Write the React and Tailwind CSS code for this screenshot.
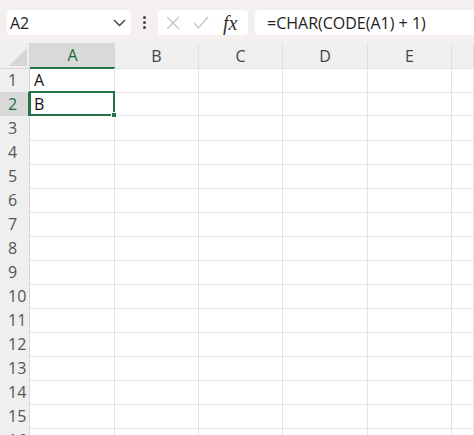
import React from 'react';

const cols = ['A', 'B', 'C', 'D', 'E', ''];
const rows = Array.from({ length: 16 }, (_, i) => i + 1);
const data = { 1: { A: 'A' }, 2: { A: 'B' } };

const gridCols = 'grid grid-cols-[30px_85px_84px_84px_85px_84px_1fr]';

function NameBox() {
  return (
    <div className="flex items-center justify-between w-[124px] h-[25px] bg-white rounded-[4px] pl-[3px] pr-[5px]">
      <span className="text-[16px] text-[#222]">A2</span>
      <svg width="13" height="8" viewBox="0 0 13 8" fill="none" stroke="#444" strokeWidth="1.5">
        <path d="M1 1l5.5 5.5L12 1" />
      </svg>
    </div>
  );
}

function FormulaButtons() {
  return (
    <div className="flex items-center w-[90px] h-[25px] bg-white rounded-[4px] pl-[8px]">
      <svg width="14" height="14" viewBox="0 0 14 14" stroke="#c4c4c4" strokeWidth="1.2">
        <path d="M1 1l12 12M13 1L1 13" />
      </svg>
      <svg className="ml-[13px]" width="16" height="13" viewBox="0 0 16 13" fill="none" stroke="#c4c4c4" strokeWidth="1.2">
        <path d="M1 7l4.5 5L15 1" />
      </svg>
      <span className="ml-[14px] text-[20px] italic text-[#333] font-['Liberation_Serif',serif] leading-none">fx</span>
    </div>
  );
}

export default function App() {
  return (
    <div className="w-[474px] h-[435px] overflow-hidden bg-white font-['Open_Sans','Noto_Sans',sans-serif]">
      {/* formula bar */}
      <div className="flex items-center h-[43px] bg-[#f4f0ef] pl-[7px] pb-[8px] pt-[10px]">
        <NameBox />
        <div className="flex flex-col items-center gap-[2px] w-[27px]">
          <span className="w-[3px] h-[3px] rounded-full bg-[#444]" />
          <span className="w-[3px] h-[3px] rounded-full bg-[#444]" />
          <span className="w-[3px] h-[3px] rounded-full bg-[#444]" />
        </div>
        <FormulaButtons />
        <div className="flex items-center flex-1 h-[25px] ml-[7px] bg-white rounded-l-[4px] pl-[12px]">
          <span className="text-[16px] text-[#222]">=CHAR(CODE(A1) + 1)</span>
        </div>
      </div>

      {/* column headers */}
      <div className={`${gridCols} h-[25px] bg-[#efefef]`}>
        <div className="relative border-r border-b border-[#d6d6d6]">
          <svg className="absolute right-[2px] bottom-[2px]" width="18" height="18" viewBox="0 0 18 18">
            <path d="M18 0V18H0Z" fill="#d6d6d6" />
          </svg>
        </div>
        {cols.map((c, i) =>
          c === 'A' ? (
            <div key={i} className="flex items-center justify-center bg-[#d9d9d9] border-b-2 border-[#217346] text-[16px] text-[#1d6b3f]">
              {c}
            </div>
          ) : (
            <div key={i} className="flex items-center justify-center border-r border-b border-[#e0e0e0] text-[16px] text-[#444]">
              {c}
            </div>
          )
        )}
      </div>

      {/* sheet rows */}
      {rows.map((r) => (
        <div key={r} className={`${gridCols} h-[24px]`}>
          <div
            className={
              r === 2
                ? 'flex items-center pl-[8px] bg-[#d9d9d9] border-r-2 border-[#217346] text-[16px] text-[#1d6b3f]'
                : 'flex items-center pl-[8px] bg-[#efefef] border-r border-b border-[#d6d6d6] text-[16px] text-[#555]'
            }
          >
            {r}
          </div>
          {cols.map((c, i) => {
            const selected = r === 2 && c === 'A';
            return (
              <div
                key={i}
                className={
                  selected
                    ? 'relative flex items-center pl-[3px] -ml-[1px] -mt-[1px] h-[25px] border-2 border-[#217346] text-[16px] text-[#111]'
                    : 'flex items-center pl-[4px] border-r border-b border-[#e4e4e4] text-[16px] text-[#111]'
                }
              >
                {data[r]?.[c]}
                {selected && <span className="absolute -right-[4px] -bottom-[4px] w-[6px] h-[6px] bg-[#217346] border border-white" />}
              </div>
            );
          })}
        </div>
      ))}
    </div>
  );
}
